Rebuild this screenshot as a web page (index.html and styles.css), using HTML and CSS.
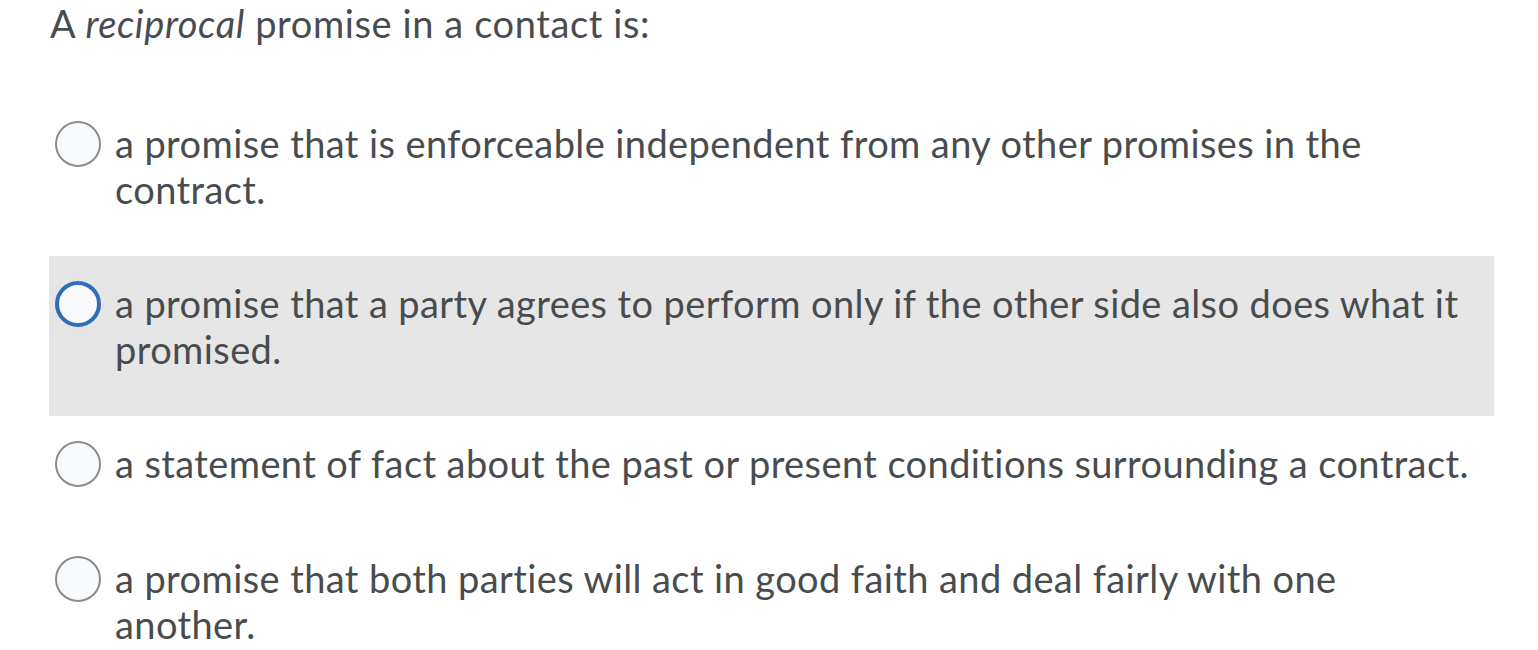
FILE: index.html
```html
<!DOCTYPE html>
<html>
<head>
<meta charset="utf-8">
<link rel="stylesheet" href="styles.css">
</head>
<body>
<div class="quiz">
  <div class="question">A <em>reciprocal</em> promise in a contact is:</div>
  <div class="options">
    <label class="option">
      <span class="radio"></span>
      <span class="text">a promise that is enforceable independent from any other promises in the contract.</span>
    </label>
    <label class="option option-hover">
      <span class="radio radio-focus"></span>
      <span class="text">a promise that a party agrees to perform only if the other side also does what it promised.</span>
    </label>
    <label class="option">
      <span class="radio"></span>
      <span class="text">a statement of fact about the past or present conditions surrounding a contract.</span>
    </label>
    <label class="option">
      <span class="radio"></span>
      <span class="text">a promise that both parties will act in good faith and deal fairly with one another.</span>
    </label>
  </div>
</div>
</body>
</html>
```

FILE: styles.css
```css
html, body {
  margin: 0;
  padding: 0;
  background: #ffffff;
}
body {
  font-family: "Lato", "Liberation Sans", sans-serif;
  font-size: 38px;
  line-height: 46px;
  letter-spacing: 0.4px;
  color: #494c4e;
}
.quiz {
  width: 1445px;
  margin-left: 49px;
}
.question {
  padding-left: 1px;
  letter-spacing: 0.6px;
}
.question em {
  font-style: italic;
}
.options {
  margin-top: 50px;
  display: flex;
  flex-direction: column;
}
.option {
  display: flex;
  align-items: flex-start;
  padding: 24px 16px 44px 6px;
  gap: 14px;
}
.option:last-child {
  padding-bottom: 0;
}
.option-hover {
  background: #e6e6e6;
}
.radio {
  flex: none;
  box-sizing: border-box;
  width: 46px;
  height: 46px;
  margin-top: 1px;
  border-radius: 50%;
  border: 2px solid #8a8d90;
  background: #f9fafc;
}
.radio-focus {
  border: 4px solid #2e6fb8;
}
.text {
  flex: 1;
}
```
